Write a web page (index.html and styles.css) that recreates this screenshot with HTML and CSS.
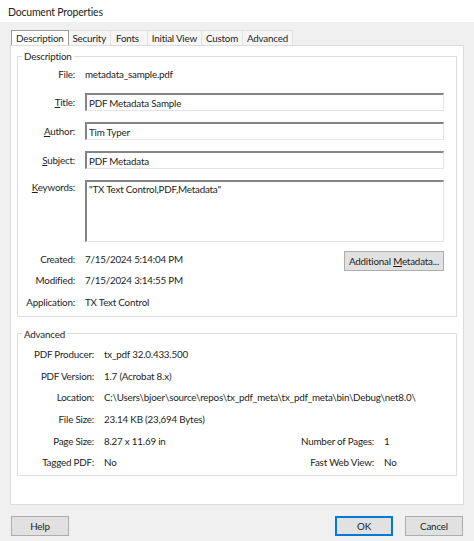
FILE: index.html
```html
<!DOCTYPE html>
<html lang="en">

<head>
    <meta charset="UTF-8">
    <title>Document Properties</title>
    <link rel="stylesheet" href="styles.css">
</head>

<body>
    <!-- title bar -->
    <div class="titlebar">Document Properties</div>

    <!-- tabs -->
    <div class="tabs">
        <div class="tab active">Description</div>
        <div class="tab">Security</div>
        <div class="tab wide-tab">Fonts</div>
        <div class="tab">Initial View</div>
        <div class="tab">Custom</div>
        <div class="tab">Advanced</div>
    </div>

    <div class="panel">
        <fieldset class="group">
            <legend>Description</legend>
            <div class="fields">
                <span class="label">File:</span>
                <span class="value">metadata_sample.pdf</span>

                <span class="label"><u>T</u>itle:</span>
                <input class="box" type="text" value="PDF Metadata Sample">

                <span class="label"><u>A</u>uthor:</span>
                <input class="box" type="text" value="Tim Typer">

                <span class="label"><u>S</u>ubject:</span>
                <input class="box" type="text" value="PDF Metadata">

                <span class="label top"><u>K</u>eywords:</span>
                <textarea class="box area">"TX Text Control,PDF,Metadata"</textarea>
            </div>

            <div class="dates">
                <span class="label">Created:</span>
                <span class="value">7/15/2024 5:14:04 PM</span>
                <button class="btn meta">Additional <u>M</u>etadata...</button>

                <span class="label">Modified:</span>
                <span class="value">7/15/2024 3:14:55 PM</span>

                <span class="label">Application:</span>
                <span class="value">TX Text Control</span>
            </div>
        </fieldset>

        <fieldset class="group adv">
            <legend>Advanced</legend>
            <div class="advgrid">
                <span class="label">PDF Producer:</span>
                <span class="value wide">tx_pdf 32.0.433.500</span>

                <span class="label">PDF Version:</span>
                <span class="value wide">1.7 (Acrobat 8.x)</span>

                <span class="label">Location:</span>
                <span class="value wide">C:\Users\bjoer\source\repos\tx_pdf_meta\tx_pdf_meta\bin\Debug\net8.0\</span>

                <span class="label">File Size:</span>
                <span class="value wide">23.14 KB (23,694 Bytes)</span>

                <span class="label">Page Size:</span>
                <span class="value">8.27 x 11.69 in</span>
                <span class="label">Number of Pages:</span>
                <span class="value">1</span>

                <span class="label">Tagged PDF:</span>
                <span class="value">No</span>
                <span class="label">Fast Web View:</span>
                <span class="value">No</span>
            </div>
        </fieldset>
    </div>

    <div class="footer">
        <button class="btn">Help</button>
        <div class="right">
            <button class="btn ok">OK</button>
            <button class="btn">Cancel</button>
        </div>
    </div>
</body>

</html>
```

FILE: styles.css
```css
body {
    margin: 0;
    background: #f0f0f0;
    font-family: Lato, "Open Sans", sans-serif;
    font-size: 9.8px;
    letter-spacing: -0.2px;
    color: #1e1e1e;
    width: 474px;
    height: 541px;
    overflow: hidden;
}

.titlebar {
    background: #fff;
    height: 22px;
    line-height: 24px;
    padding-left: 8px;
    font-size: 10.5px;
    letter-spacing: -0.2px;
}

.tabs {
    display: flex;
    margin: 8px 0 0 11px;
    height: 15px;
}

.tab {
    padding: 0 4px;
    line-height: 14px;
    background: #f6f6f6;
    border: 1px solid #e2e2e2;
    border-bottom: none;
    border-left: none;
}

.tab.wide-tab {
    padding: 0 8px 0 5px;
}

.tab.active {
    background: #fff;
    border: 1px solid #9a9a9a;
    border-bottom: none;
    height: 14px;
}

.panel {
    margin: 0 10px;
    height: 458px;
    background: #fff;
    border: 1px solid #dcdcdc;
    padding: 0 6px;
}

.group {
    margin: 3px 0 0;
    padding: 0 12px 0 0;
    border: 1px solid #dedede;
    min-width: 0;
}

.group legend {
    margin-left: 4px;
    padding: 0 2px;
    line-height: 14px;
}

.label {
    text-align: right;
    white-space: nowrap;
}

.label.top {
    align-self: start;
    line-height: 14px;
}

.value {
    white-space: nowrap;
}

.fields {
    display: grid;
    grid-template-columns: 57px 1fr;
    column-gap: 10px;
    row-gap: 11px;
    align-items: center;
    margin-top: 3px;
    grid-template-rows: 16px 18px 18px 18px 62px;
}

.box {
    font: inherit;
    letter-spacing: inherit;
    color: inherit;
    height: 18px;
    box-sizing: border-box;
    padding: 0 2px;
    border: 1px solid #e4e4e4;
    border-top: 2px solid #858585;
    border-left: 2px solid #858585;
    outline: none;
    background: #fff;
}

.area {
    height: 62px;
    resize: none;
    padding-top: 1px;
    overflow: hidden;
}

.dates {
    display: grid;
    grid-template-columns: 57px 1fr auto;
    column-gap: 10px;
    grid-auto-rows: 21.5px;
    align-items: center;
    margin: 6px 0 3px;
}

.btn {
    font: inherit;
    letter-spacing: inherit;
    color: inherit;
    background: #e1e1e1;
    border: 1px solid #adadad;
    padding: 0;
    height: 20px;
    white-space: nowrap;
}

.meta {
    grid-column: 3;
    grid-row: 1 / 3;
    align-self: start;
    margin-top: 3px;
    width: 100px;
}

.adv {
    margin-top: 10px;
    padding-bottom: 2px;
}

.advgrid {
    display: grid;
    grid-template-columns: 76px 1fr auto 60px;
    column-gap: 10px;
    grid-auto-rows: 21.6px;
    align-items: center;
    margin-top: 3px;
}

.advgrid .wide {
    grid-column: 2 / 5;
}

.footer {
    display: flex;
    justify-content: space-between;
    padding: 11px 11px 0;
}

.footer .btn {
    width: 58px;
}

.right {
    display: flex;
    gap: 12px;
}

.ok {
    border: 1px solid #0078d7;
    box-shadow: inset 0 0 0 1px #0078d7;
}
```
